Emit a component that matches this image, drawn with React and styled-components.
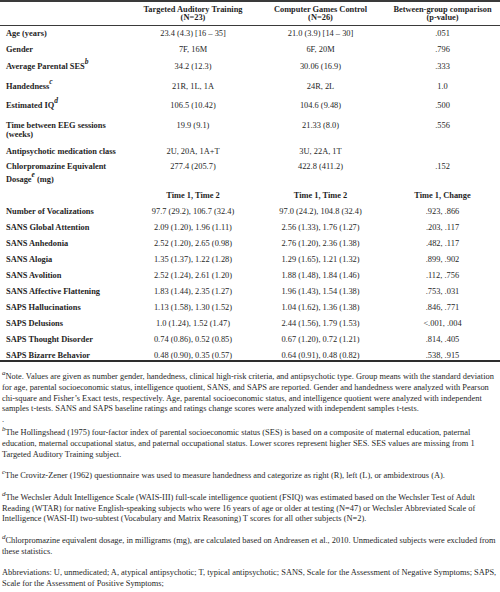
import React from "react";
import styled, { createGlobalStyle } from "styled-components";

const GlobalStyle = createGlobalStyle`
  html, body {
    margin: 0;
    padding: 0;
    background: #ffffff;
  }
  body {
    font-family: "Liberation Serif", "Times New Roman", serif;
    color: #1f1f1f;
  }
`;

const Page = styled.div`
  width: 500px;
  height: 592px;
  overflow: hidden;
`;

const Table = styled.table`
  width: 500px;
  border-collapse: collapse;
  table-layout: fixed;
  border-top: 2px solid #3a3a3a;
  border-bottom: 2px solid #2e2e2e;
  font-size: 8.4px;
`;

const HeadRow = styled.tr`
  height: 24px;
  border-bottom: 1px solid #3a3a3a;
`;

const HeadCell = styled.th`
  padding: 4px 0 0;
  vertical-align: top;
  text-align: center;
  font-weight: bold;
  line-height: 8px;
  white-space: nowrap;
`;

const Row = styled.tr`
  height: ${(p) => p.$h}px;
`;

const Label = styled.td`
  padding: 3px 0 0 6px;
  vertical-align: top;
  font-weight: bold;
  line-height: 9px;
  white-space: nowrap;
`;

const Value = styled.td`
  padding: 3px 0 0;
  vertical-align: top;
  text-align: center;
  line-height: 9px;
  white-space: nowrap;
  font-weight: ${(p) => (p.$bold ? "bold" : "normal")};
`;

const SecondLine = styled.div`
  padding-top: ${(p) => p.$gap || 0}px;
`;

const Sup = styled.sup`
  font-size: 7.5px;
  font-style: italic;
  font-weight: bold;
  line-height: 0;
  vertical-align: 5px;
`;

const Notes = styled.div`
  padding: 10px 0 0 2px;
  font-size: 8.4px;
  line-height: 10.8px;
`;

const Note = styled.p`
  margin: 0 0 ${(p) => (p.$tight ? 2 : 10.8)}px;
  white-space: nowrap;
`;

const NoteSup = styled.sup`
  font-size: 7px;
  font-style: italic;
  line-height: 0;
  vertical-align: 4.5px;
`;

const demographics = [
  { label: "Age (years)", a: "23.4 (4.3) [16 – 35]", b: "21.0 (3.9) [14 – 30]", p: ".051", h: 17 },
  { label: "Gender", a: "7F, 16M", b: "6F, 20M", p: ".796", h: 17 },
  { label: "Average Parental SES", sup: "b", a: "34.2 (12.3)", b: "30.06 (16.9)", p: ".333", h: 20 },
  { label: "Handedness", sup: "c", a: "21R, 1L, 1A", b: "24R, 2L", p: "1.0", h: 19 },
  { label: "Estimated IQ", sup: "d", a: "106.5 (10.42)", b: "104.6 (9.48)", p: ".500", h: 20 },
];

const symptoms = [
  ["Number of Vocalizations", "97.7 (29.2), 106.7 (32.4)", "97.0 (24.2), 104.8 (32.4)", ".923, .866"],
  ["SANS Global Attention", "2.09 (1.20), 1.96 (1.11)", "2.56 (1.33), 1.76 (1.27)", ".203, .117"],
  ["SANS Anhedonia", "2.52 (1.20), 2.65 (0.98)", "2.76 (1.20), 2.36 (1.38)", ".482, .117"],
  ["SANS Alogia", "1.35 (1.37), 1.22 (1.28)", "1.29 (1.65), 1.21 (1.32)", ".899, .902"],
  ["SANS Avolition", "2.52 (1.24), 2.61 (1.20)", "1.88 (1.48), 1.84 (1.46)", ".112, .756"],
  ["SANS Affective Flattening", "1.83 (1.44), 2.35 (1.27)", "1.96 (1.43), 1.54 (1.38)", ".753, .031"],
  ["SAPS Hallucinations", "1.13 (1.58), 1.30 (1.52)", "1.04 (1.62), 1.36 (1.38)", ".846, .771"],
  ["SAPS Delusions", "1.0 (1.24), 1.52 (1.47)", "2.44 (1.56), 1.79 (1.53)", "<.001, .004"],
  ["SAPS Thought Disorder", "0.74 (0.86), 0.52 (0.85)", "0.67 (1.20), 0.72 (1.21)", ".814, .405"],
  ["SAPS Bizarre Behavior", "0.48 (0.90), 0.35 (0.57)", "0.64 (0.91), 0.48 (0.82)", ".538, .915"],
];

export default function App() {
  return (
    <Page>
      <GlobalStyle />
      <Table>
        <colgroup>
          <col style={{ width: 130 }} />
          <col style={{ width: 126 }} />
          <col style={{ width: 129 }} />
          <col style={{ width: 115 }} />
        </colgroup>
        <thead>
          <HeadRow>
            <HeadCell />
            <HeadCell>
              Targeted Auditory Training
              <br />
              (N=23)
            </HeadCell>
            <HeadCell>
              Computer Games Control
              <br />
              (N=26)
            </HeadCell>
            <HeadCell>
              Between-group comparison
              <br />
              (p-value)
            </HeadCell>
          </HeadRow>
        </thead>
        <tbody>
          {demographics.map((r) => (
            <Row key={r.label} $h={r.h}>
              <Label>
                {r.label}
                {r.sup && <Sup>{r.sup}</Sup>}
              </Label>
              <Value>{r.a}</Value>
              <Value>{r.b}</Value>
              <Value>{r.p}</Value>
            </Row>
          ))}
          <Row $h={26}>
            <Label>
              Time between EEG sessions
              <SecondLine>(weeks)</SecondLine>
            </Label>
            <Value>19.9 (9.1)</Value>
            <Value>21.33 (8.0)</Value>
            <Value>.556</Value>
          </Row>
          <Row $h={15}>
            <Label>Antipsychotic medication class</Label>
            <Value>2U, 20A, 1A+T</Value>
            <Value>3U, 22A, 1T</Value>
            <Value />
          </Row>
          <Row $h={29}>
            <Label>
              Chlorpromazine Equivalent
              <SecondLine $gap={4}>
                Dosage<Sup>e</Sup> (mg)
              </SecondLine>
            </Label>
            <Value>277.4 (205.7)</Value>
            <Value>422.8 (411.2)</Value>
            <Value>.152</Value>
          </Row>
          <Row $h={16}>
            <Label />
            <Value $bold>Time 1, Time 2</Value>
            <Value $bold>Time 1, Time 2</Value>
            <Value $bold>Time 1, Change</Value>
          </Row>
          {symptoms.map(([label, a, b, p], i) => (
            <Row key={label} $h={i === symptoms.length - 1 ? 13 : 16}>
              <Label>{label}</Label>
              <Value>{a}</Value>
              <Value>{b}</Value>
              <Value>{p}</Value>
            </Row>
          ))}
        </tbody>
      </Table>

      <Notes>
        <Note $tight>
          <NoteSup>a</NoteSup>Note. Values are given as number gender, handedness, clinical high-risk criteria, and antipsychotic type. Group means with the standard deviation
          <br />
          for age, parental socioeconomic status, intelligence quotient, SANS, and SAPS are reported. Gender and handedness were analyzed with Pearson
          <br />
          chi-square and Fisher’s Exact tests, respectively. Age, parental socioeconomic status, and intelligence quotient were analyzed with independent
          <br />
          samples t-tests. SANS and SAPS baseline ratings and ratings change scores were analyzed with independent samples t-tests.
          <br />.
        </Note>
        <Note>
          <NoteSup>b</NoteSup>The Hollingshead (1975) four-factor index of parental socioeconomic status (SES) is based on a composite of maternal education, paternal
          <br />
          education, maternal occupational status, and paternal occupational status. Lower scores represent higher SES. SES values are missing from 1
          <br />
          Targeted Auditory Training subject.
        </Note>
        <Note>
          <NoteSup>c</NoteSup>The Crovitz-Zener (1962) questionnaire was used to measure handedness and categorize as right (R), left (L), or ambidextrous (A).
        </Note>
        <Note>
          <NoteSup>d</NoteSup>The Wechsler Adult Intelligence Scale (WAIS-III) full-scale intelligence quotient (FSIQ) was estimated based on the Wechsler Test of Adult
          <br />
          Reading (WTAR) for native English-speaking subjects who were 16 years of age or older at testing (N=47) or Wechsler Abbreviated Scale of
          <br />
          Intelligence (WASI-II) two-subtest (Vocabulary and Matrix Reasoning) T scores for all other subjects (N=2).
        </Note>
        <Note>
          <NoteSup>d</NoteSup>Chlorpromazine equivalent dosage, in milligrams (mg), are calculated based on Andreasen et al., 2010. Unmedicated subjects were excluded from
          <br />
          these statistics.
        </Note>
        <Note>
          Abbreviations: U, unmedicated; A, atypical antipsychotic; T, typical antipsychotic; SANS, Scale for the Assessment of Negative Symptoms; SAPS,
          <br />
          Scale for the Assessment of Positive Symptoms;
        </Note>
      </Notes>
    </Page>
  );
}
